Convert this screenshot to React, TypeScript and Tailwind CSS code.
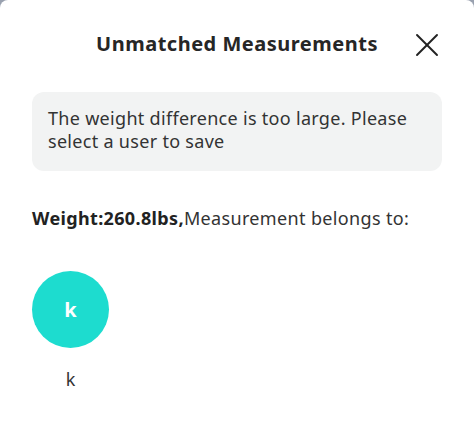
import { X } from "lucide-react";

export default function App() {
  return (
    <div className="w-[474px] h-[434px] bg-gray-400">
      <div
        className="w-full h-full bg-white rounded-t-[8px] text-[#2b2b2b]"
        style={{ fontFamily: "'Noto Sans', sans-serif" }}
      >
        <header className="relative h-[88px] flex items-center justify-center pb-[1px]">
          <h1 className="text-[20px] font-bold tracking-[0.5px] text-[#262626]">
            Unmatched Measurements
          </h1>
          <button className="absolute right-[27px] top-[25px] text-[#222]">
            <X size={40} strokeWidth={1.15} />
          </button>
        </header>

        <section className="mx-[32px] mt-[4px] rounded-[12px] bg-[#f2f3f3] px-[16px] pt-[15px] pb-[18px]">
          <p className="text-[18px] leading-[23px] tracking-[0.3px] text-[#333]">
            The weight difference is too large. Please select a user to save
          </p>
        </section>

        <p className="mx-[32px] mt-[35px] text-[18px] leading-[24px] tracking-[0.35px] text-[#333]">
          <span className="font-bold text-[#222]">Weight:260.8lbs,</span>
          Measurement belongs to:
        </p>

        <div className="ml-[32px] mt-[41px] flex w-[77px] flex-col items-center gap-[19px]">
          <div className="flex h-[77px] w-[77px] items-center justify-center rounded-full bg-[#1ddccf]">
            <span className="text-[20px] font-bold text-white">k</span>
          </div>
          <span className="text-[18px] leading-[24px] text-[#333]">k</span>
        </div>
      </div>
    </div>
  );
}
